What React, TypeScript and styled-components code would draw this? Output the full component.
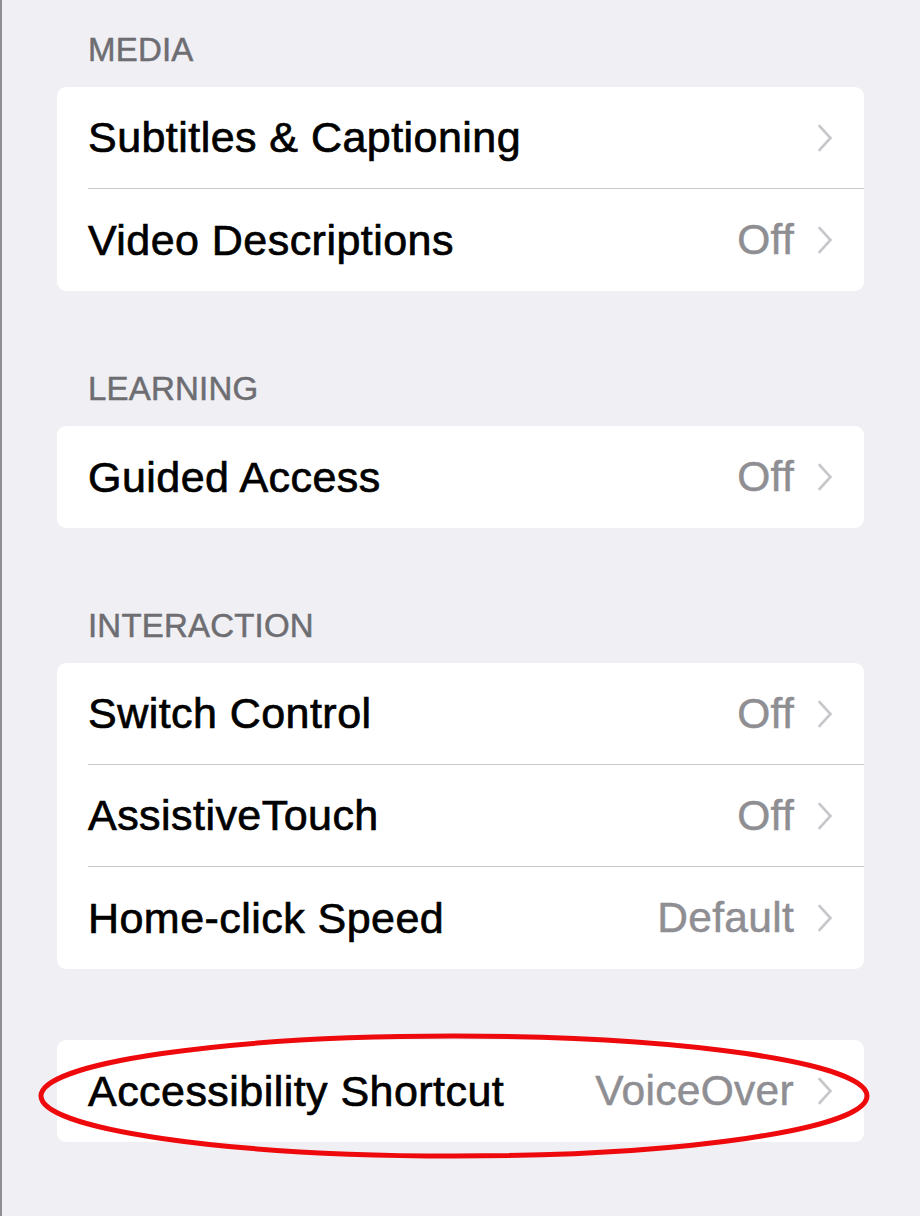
import React from 'react'
import styled, { createGlobalStyle } from 'styled-components'

const GlobalStyle = createGlobalStyle`
  html, body {
    margin: 0;
    padding: 0;
    background: #efeff4;
  }
  body {
    font-family: "Liberation Sans", Arial, Helvetica, sans-serif;
    -webkit-font-smoothing: antialiased;
  }
`

const Page = styled.div`
  position: relative;
  width: 920px;
  height: 1216px;
  box-sizing: border-box;
  border-left: 2px solid #8f8f93;
  padding: 0 56px 0 55px;
  overflow: hidden;
`

const SectionHeader = styled.div`
  height: 87px;
  box-sizing: border-box;
  padding: 0 0 17px 31px;
  display: flex;
  align-items: flex-end;
  font-size: 33px;
  line-height: 40px;
  color: #6d6d72;
  letter-spacing: 0.2px;
  -webkit-text-stroke: 0.5px #6d6d72;
`

const Spacer = styled.div<{ $h: number }>`
  height: ${p => p.$h}px;
`

const Card = styled.div`
  background: #fff;
  border-radius: 9px;
  overflow: hidden;
`

const Row = styled.div<{ $last?: boolean }>`
  height: 102px;
  box-sizing: border-box;
  margin-left: 31px;
  padding-right: 31px;
  display: flex;
  align-items: center;
  border-bottom: ${p => (p.$last ? 'none' : '1px solid #c8c7cc')};
`

const Label = styled.div`
  flex: 1;
  font-size: 43px;
  letter-spacing: 0.45px;
  color: #000;
  -webkit-text-stroke: 0.7px #000;
  white-space: nowrap;
`

const Value = styled.div`
  font-size: 42.5px;
  letter-spacing: 0.3px;
  color: #8e8e93;
  -webkit-text-stroke: 0.5px #8e8e93;
  margin-right: 23px;
  white-space: nowrap;
`

const Chevron = () => (
  <svg width="16" height="28" viewBox="0 0 16 28">
    <path d="M2.5 2 L13.5 14 L2.5 26" fill="none" stroke="#c7c7cc" strokeWidth="2.6" strokeLinecap="round" />
  </svg>
)

const Ellipse = styled.svg`
  position: absolute;
  left: 34px;
  top: 1030px;
`

type Item = { label: string; value?: string }

const Group = ({ items }: { items: Item[] }) => (
  <Card>
    {items.map((it, i) => (
      <Row key={it.label} $last={i === items.length - 1}>
        <Label>{it.label}</Label>
        {it.value && <Value>{it.value}</Value>}
        <Chevron />
      </Row>
    ))}
  </Card>
)

export default function App() {
  return (
    <>
      <GlobalStyle />
      <Page>
        <SectionHeader>MEDIA</SectionHeader>
        <Group items={[{ label: 'Subtitles & Captioning' }, { label: 'Video Descriptions', value: 'Off' }]} />
        <Spacer $h={48} />
        <SectionHeader>LEARNING</SectionHeader>
        <Group items={[{ label: 'Guided Access', value: 'Off' }]} />
        <Spacer $h={48} />
        <SectionHeader>INTERACTION</SectionHeader>
        <Group
          items={[
            { label: 'Switch Control', value: 'Off' },
            { label: 'AssistiveTouch', value: 'Off' },
            { label: 'Home-click Speed', value: 'Default' },
          ]}
        />
        <Spacer $h={71} />
        <Group items={[{ label: 'Accessibility Shortcut', value: 'VoiceOver' }]} />
        <Ellipse width="840" height="134" viewBox="0 0 840 134">
          <ellipse cx="418" cy="66" rx="413" ry="60" fill="none" stroke="#ee0a0c" strokeWidth="5" />
        </Ellipse>
      </Page>
    </>
  )
}
